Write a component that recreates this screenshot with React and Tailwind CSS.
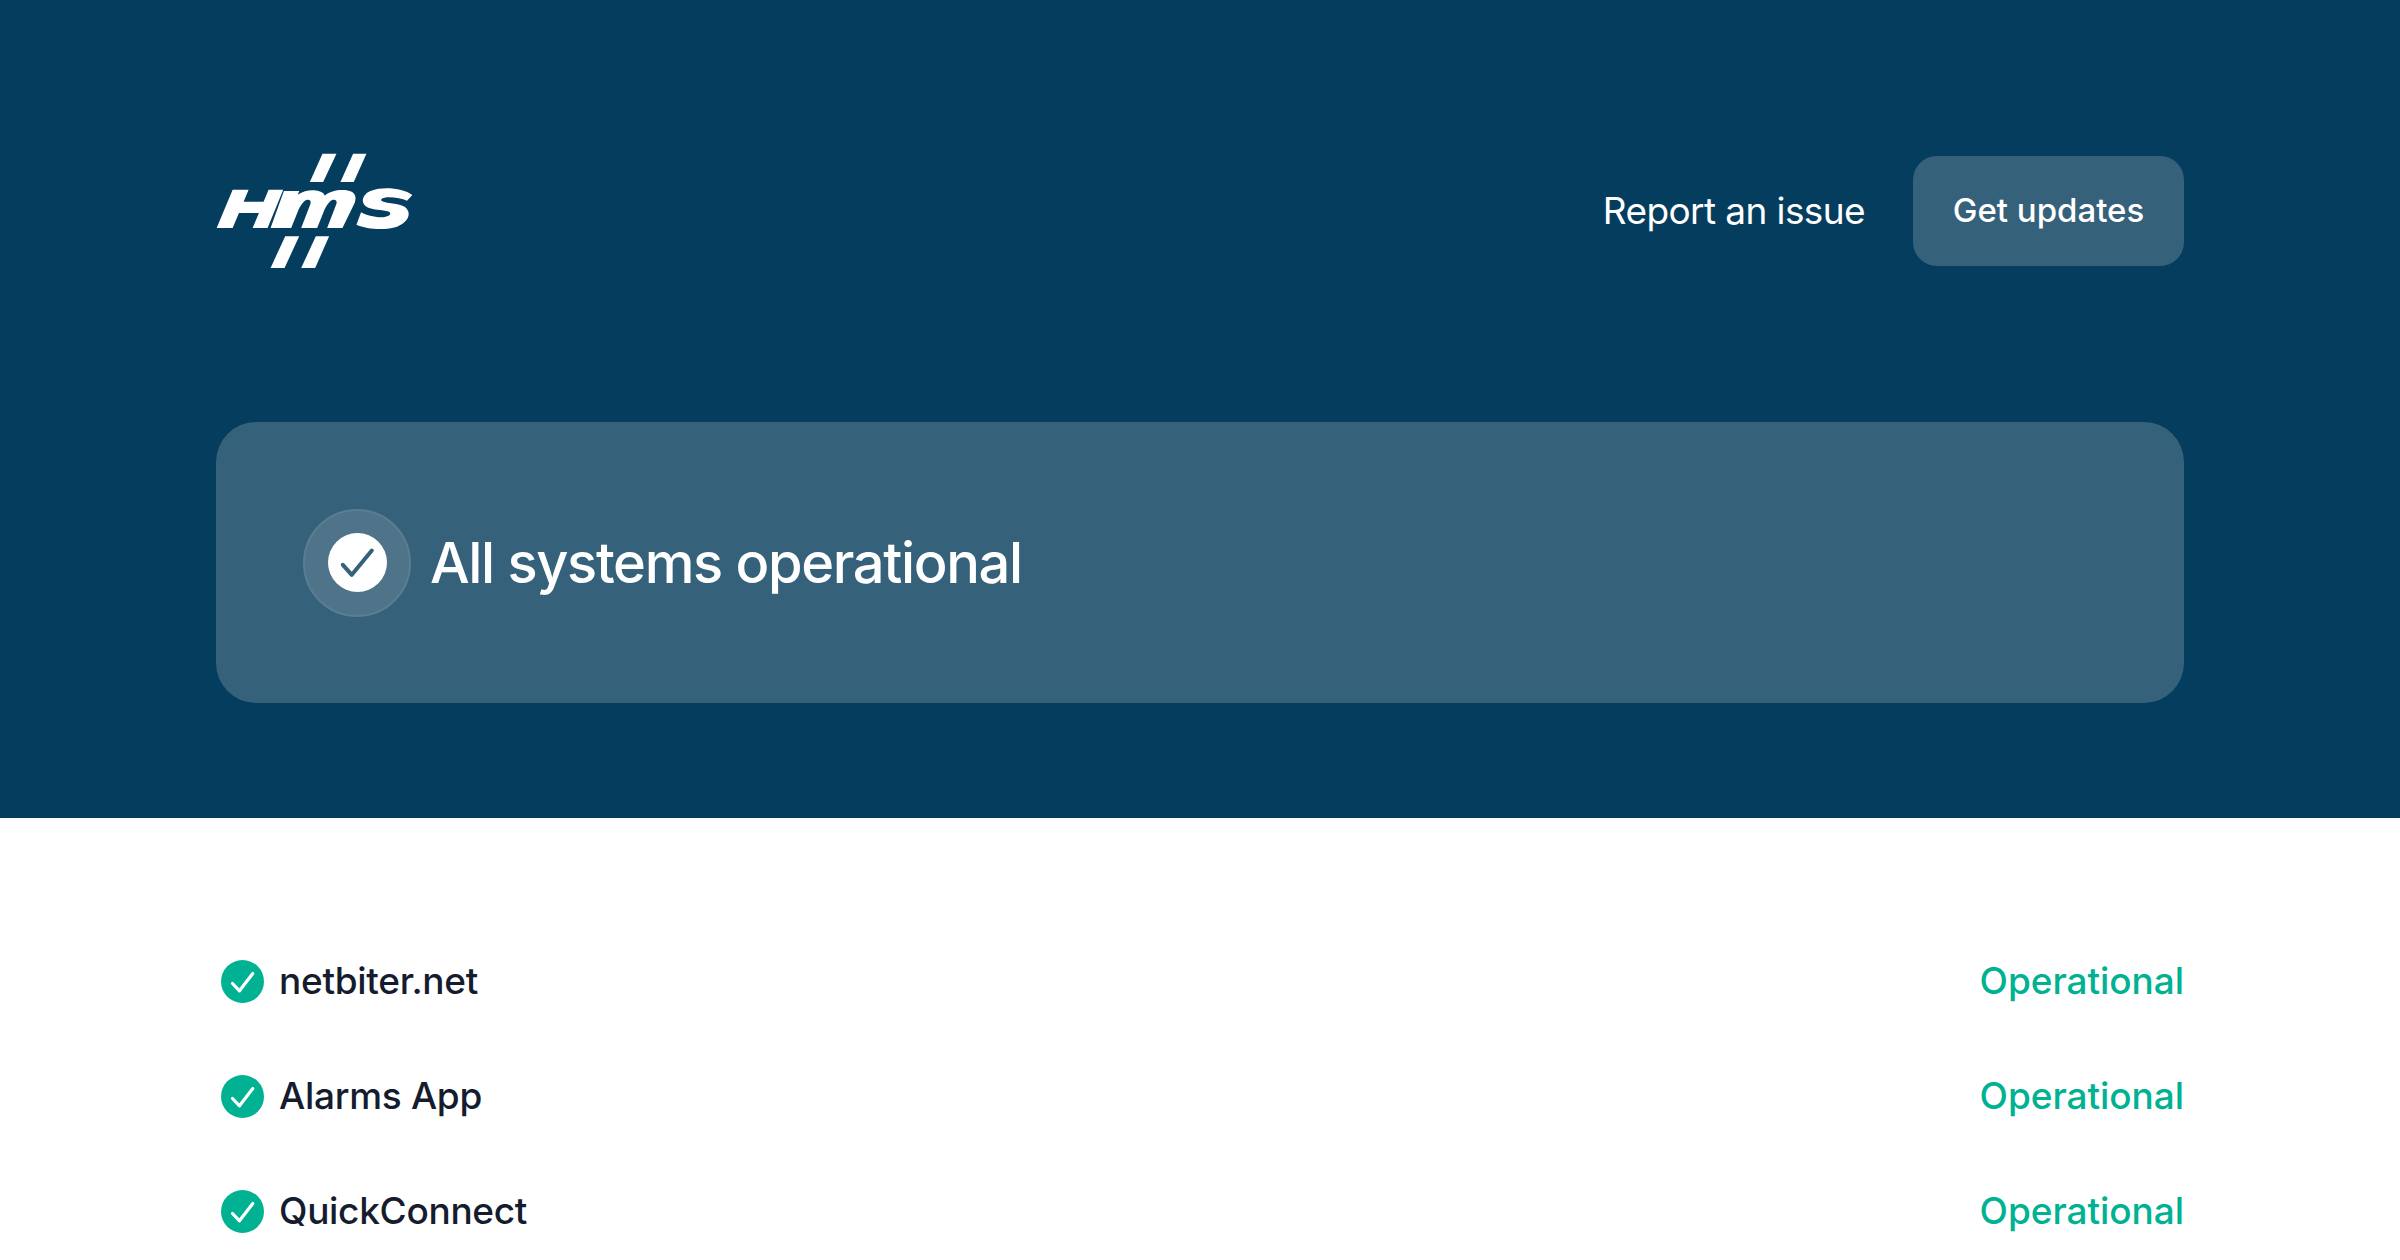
const rows = ["netbiter.net", "Alarms App", "QuickConnect"];

function Logo() {
  return (
    <svg className="block" width="197" height="116" viewBox="48 70 592 348" fill="#fff">
      <polygon points="368,72 410,72 370,157 330,157" />
      <polygon points="460,72 500,72 462,157 422,157" />
      <polygon points="256,320 298,320 254,415 212,415" />
      <polygon points="348,320 388,320 346,415 304,415" />
      <path d="M98,180 L146,180 L131,216 L191,216 L206,180 L250,180 L203,295 L158,295 L177,250 L117,250 L98,295 L50,295 Z" />
      <path d="M212,295 L252,184 L298,184 L294,195 C314,181 342,179 358,185 C368,188 373,192 375,198 C392,181 432,177 452,185 C468,191 470,205 465,219 L428,295 L382,295 L410,222 C414,210 400,206 390,216 C382,224 378,232 374,240 L352,295 L304,295 L332,222 C336,210 322,206 312,216 C304,224 300,232 296,240 L274,295 Z" />
      <path d="M638,196 C610,174 548,170 514,183 C486,194 480,222 506,234 C524,242 562,240 570,248 C576,256 564,263 544,263 C522,263 498,256 484,248 L470,285 C500,299 558,303 592,291 C626,278 638,250 616,232 C598,220 558,222 546,214 C540,208 552,203 568,203 C588,203 608,207 622,213 Z" />
    </svg>
  );
}

function RowCheck() {
  return (
    <svg className="shrink-0" width="43" height="43" viewBox="0 0 43 43">
      <circle cx="21.5" cy="21.5" r="21.5" fill="#00b291" />
      <path d="M11.5 23.5 L18.5 30.8 L31.8 13.5" fill="none" stroke="#fff" strokeWidth="3.2" strokeLinecap="round" strokeLinejoin="round" />
    </svg>
  );
}

export default function App() {
  return (
    <div className="w-full h-[1260px] overflow-hidden bg-white font-['Inter',sans-serif]">
      <header className="h-[818px] bg-[#053d5f] px-[216px] pt-[153px]">
        <div className="flex items-center justify-between h-[116px]">
          <Logo />
          <nav className="flex items-center gap-[48px]">
            <a className="text-[37px] leading-[44px] tracking-[-0.6px] text-white">Report an issue</a>
            <button className="w-[271px] h-[110px] rounded-[24px] bg-[#35627a] text-[33px] font-medium text-white">Get updates</button>
          </nav>
        </div>
        <section className="mt-[153px] h-[281px] rounded-[40px] bg-[#35627a] flex items-center pl-[87px]">
          <div className="w-[108px] h-[108px] rounded-full bg-[#4f748a] border-2 border-[#5a7d92] flex items-center justify-center shrink-0">
            <svg width="59" height="59" viewBox="0 0 59 59">
              <circle cx="29.5" cy="29.5" r="29.5" fill="#fff" />
              <path d="M14.8 31.8 L23.8 41.8 L43.8 17.5" fill="none" stroke="#35627a" strokeWidth="4" strokeLinecap="round" strokeLinejoin="round" />
            </svg>
          </div>
          <h1 className="ml-[19px] text-[56px] leading-[64px] font-medium tracking-[-1.35px] text-white">All systems operational</h1>
        </section>
      </header>
      <main className="px-[216px] pt-[140px]">
        <ul className="flex flex-col gap-[69px]">
          {rows.map((r) => (
            <li key={r} className="h-[46px] flex items-center justify-between">
              <div className="flex items-center pl-[5px] gap-[15px]">
                <RowCheck />
                <span className="text-[37px] leading-[46px] font-medium tracking-[-0.3px] text-[#141c2e]">{r}</span>
              </div>
              <span className="text-[37px] leading-[46px] font-medium tracking-[-0.05px] text-[#00b291]">Operational</span>
            </li>
          ))}
        </ul>
      </main>
    </div>
  );
}
